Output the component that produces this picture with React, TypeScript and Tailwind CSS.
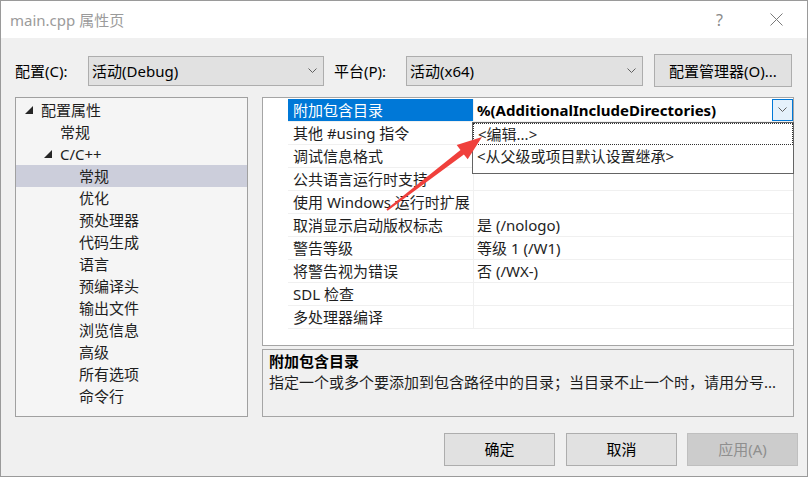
import React from "react";

const treeItems: { label: string; level: number; expanded?: boolean; selected?: boolean }[] = [
  { label: "配置属性", level: 0, expanded: true },
  { label: "常规", level: 1 },
  { label: "C/C++", level: 1, expanded: true },
  { label: "常规", level: 2, selected: true },
  { label: "优化", level: 2 },
  { label: "预处理器", level: 2 },
  { label: "代码生成", level: 2 },
  { label: "语言", level: 2 },
  { label: "预编译头", level: 2 },
  { label: "输出文件", level: 2 },
  { label: "浏览信息", level: 2 },
  { label: "高级", level: 2 },
  { label: "所有选项", level: 2 },
  { label: "命令行", level: 2 },
];

const gridRows: [string, string][] = [
  ["附加包含目录", "%(AdditionalIncludeDirectories)"],
  ["其他 #using 指令", ""],
  ["调试信息格式", ""],
  ["公共语言运行时支持", ""],
  ["使用 Windows 运行时扩展", ""],
  ["取消显示启动版权标志", "是 (/nologo)"],
  ["警告等级", "等级 1 (/W1)"],
  ["将警告视为错误", "否 (/WX-)"],
  ["SDL 检查", ""],
  ["多处理器编译", ""],
];

const Chevron = () => (
  <svg width="9" height="6" viewBox="0 0 9 6" className="shrink-0">
    <polyline points="0.5,0.5 4.5,4.5 8.5,0.5" fill="none" stroke="#606060" strokeWidth="1" />
  </svg>
);

const Triangle = () => (
  <svg width="8" height="8" viewBox="0 0 8 8" className="shrink-0">
    <polygon points="0,8 8,8 8,0" fill="#262626" />
  </svg>
);

const Select = ({ value, width }: { value: string; width: string }) => (
  <div
    className={`${width} h-[30px] bg-[#e1e1e1] border border-[#adadad] flex items-center pl-[3px] pr-[6px]`}
  >
    <span className="flex-1 text-[15px] leading-[20px] text-[#000]">{value}</span>
    <Chevron />
  </div>
);

const Button = ({ label, disabled }: { label: string; disabled?: boolean }) => (
  <div
    className={
      disabled
        ? "w-[111px] h-[33px] bg-[#cccccc] border border-[#bfbfbf] flex items-center justify-center text-[15px] text-[#8f8f8f]"
        : "w-[111px] h-[33px] bg-[#e1e1e1] border border-[#adadad] flex items-center justify-center text-[15px] text-[#000]"
    }
  >
    {label}
  </div>
);

export default function App() {
  return (
    <div className="w-[808px] h-[477px] overflow-hidden border border-[#9a9a9a] bg-[#f0f0f0] flex flex-col font-['Noto_Sans','Noto_Sans_CJK_SC',sans-serif] text-[#000]">
      {/* title bar */}
      <div className="h-[37px] shrink-0 bg-white flex items-center pl-[9px]">
        <span className="text-[15px] leading-[20px] text-[#9b9b9b]">main.cpp 属性页</span>
        <div className="ml-auto flex items-center">
          <span className="text-[16px] leading-[20px] text-[#8a8a8a]">?</span>
          <svg width="13" height="13" viewBox="0 0 13 13" className="ml-[47px] mr-[24px]">
            <line x1="0.5" y1="0.5" x2="12.5" y2="12.5" stroke="#7a7a7a" strokeWidth="1" />
            <line x1="12.5" y1="0.5" x2="0.5" y2="12.5" stroke="#7a7a7a" strokeWidth="1" />
          </svg>
        </div>
      </div>

      <div className="flex-1 pl-[14px] pt-[16px] flex flex-col">
        {/* configuration row */}
        <div className="h-[33px] flex items-center text-[15px] leading-[20px]">
          <span className="w-[73px]">配置(C):</span>
          <Select value="活动(Debug)" width="w-[236px]" />
          <span className="ml-[10px] w-[72px]">平台(P):</span>
          <Select value="活动(x64)" width="w-[237px]" />
          <div className="ml-[11px] w-[138px] h-[33px] bg-[#e1e1e1] border border-[#adadad] flex items-center justify-center">
            配置管理器(O)...
          </div>
        </div>

        {/* main area */}
        <div className="mt-[10px] flex">
          {/* tree */}
          <div className="w-[233px] h-[320px] border border-[#a0a0a0] bg-[#f5f5f5] pt-[1px]">
            {treeItems.map((it, i) => (
              <div
                key={i}
                className={`h-[22px] flex items-center text-[15px] leading-[20px] text-[#1e1e1e] ${
                  it.selected ? "bg-[#cccedb]" : ""
                }`}
              >
                {it.level === 0 && (
                  <>
                    <span className="w-[9px]" />
                    <Triangle />
                    <span className="w-[8px]" />
                  </>
                )}
                {it.level === 1 && it.expanded && (
                  <>
                    <span className="w-[28px]" />
                    <Triangle />
                    <span className="w-[8px]" />
                  </>
                )}
                {it.level === 1 && !it.expanded && <span className="w-[44px]" />}
                {it.level === 2 && <span className="w-[63px]" />}
                <span>{it.label}</span>
              </div>
            ))}
          </div>

          {/* right column */}
          <div className="ml-[14px] w-[532px] flex flex-col">
            <div className="relative h-[249px] border border-[#a5a5a5] bg-white pt-[1px]">
              {gridRows.map(([name, value], i) => (
                <div key={i} className="h-[23px] flex text-[15px] leading-[20px]">
                  <div className="w-[25px]" />
                  <div
                    className={`w-[186px] border-r border-b border-[#f0f0f0] flex items-center pl-[5px] ${
                      i === 0 ? "bg-[#0078d7] text-white" : "text-[#1e1e1e]"
                    }`}
                  >
                    {name}
                  </div>
                  <div
                    className={`flex-1 border-b border-[#f0f0f0] flex items-center pl-[3px] ${
                      i === 0 ? "font-bold text-[#000]" : "text-[#1e1e1e]"
                    }`}
                  >
                    {value}
                  </div>
                </div>
              ))}

              {/* dropdown button */}
              <div className="absolute left-[509px] top-[1px] w-[21px] h-[22px] bg-[#e5f1fb] border border-[#0078d7] flex items-center justify-center">
                <Chevron />
              </div>

              {/* dropdown list */}
              <div className="absolute left-[209px] top-[24px] w-[322px] h-[52px] bg-white border border-[#646464] text-[15px] leading-[20px] text-[#1e1e1e]">
                <div className="h-[22px] border border-dotted border-[#303030] flex items-center pl-[4px]">
                  &lt;编辑...&gt;
                </div>
                <div className="h-[22px] flex items-center pl-[4px]">&lt;从父级或项目默认设置继承&gt;</div>
              </div>

              {/* red arrow */}
              <svg
                className="absolute left-0 top-0 pointer-events-none"
                width="532"
                height="249"
                viewBox="0 0 532 249"
              >
                <polygon
                  points="123.4,111.2 197.5,52.0 193.7,47.1 219,39 204.7,61.3 200.9,56.4 124.6,112.8"
                  fill="#f0403c"
                />
              </svg>
            </div>

            <div className="mt-[3px] h-[68px] border border-[#a5a5a5] bg-[#f0f0f0] px-[6px] pt-[1px] text-[15px] leading-[21px]">
              <div className="font-bold">附加包含目录</div>
              <div className="text-[#1e1e1e]">指定一个或多个要添加到包含路径中的目录；当目录不止一个时，请用分号...</div>
            </div>
          </div>
        </div>

        {/* bottom buttons */}
        <div className="mt-[16px] flex justify-end pr-[9px]">
          <Button label="确定" />
          <div className="w-[11px]" />
          <Button label="取消" />
          <div className="w-[10px]" />
          <Button label="应用(A)" disabled />
        </div>
      </div>
    </div>
  );
}
